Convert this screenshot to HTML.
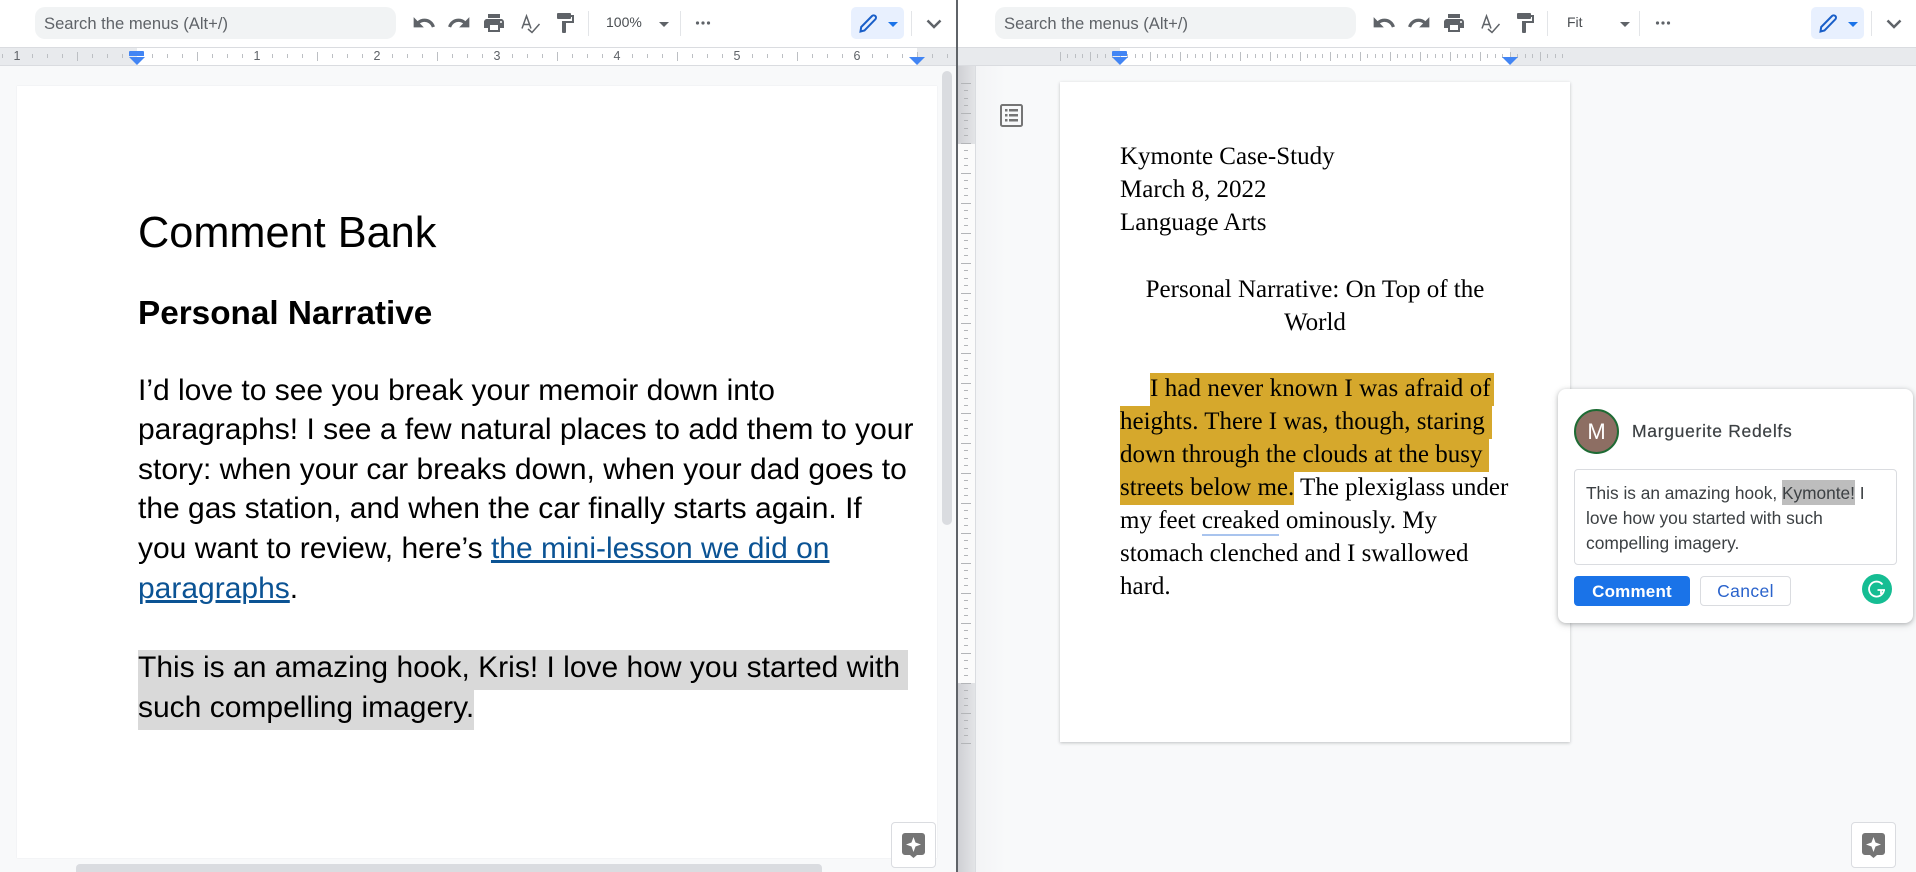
<!DOCTYPE html>
<html lang="en"><head><meta charset="utf-8"><title>Docs</title>
<style>
html,body{margin:0;padding:0;width:1916px;height:872px;overflow:hidden;background:#f8f9fa}
body{position:relative;font-family:"Liberation Sans",sans-serif;color:#000}
.a{position:absolute}
.l{position:absolute;white-space:nowrap;height:40px;line-height:40px;font-size:30px;left:138px}
.s{position:absolute;white-space:nowrap;height:33px;line-height:33px;font-size:25px;font-family:"Liberation Serif",serif;left:1120px;color:#000}
.hl{position:absolute;background:#d6a82c}
.search{position:absolute;top:7px;height:32px;border-radius:10px;background:#f1f3f4;color:#5f6368;font-size:16.6px;line-height:33px;box-sizing:border-box;padding-left:9px}
svg.i{position:absolute;top:11px;width:24px;height:24px;fill:#5f6368}
.sep{position:absolute;top:11px;width:1px;height:25px;background:#e3e5e8}
.car{position:absolute;top:22px;width:0;height:0;border-left:5px solid transparent;border-right:5px solid transparent;border-top:5px solid #5f6368}
.num{position:absolute;top:48px;width:16px;text-align:center;font-size:12.5px;line-height:17px;color:#5f6368;margin-left:-8px}
.mk{position:absolute;top:57px;width:0;height:0;border-left:8px solid transparent;border-right:8px solid transparent;border-top:8px solid #4285f4}
.mr{position:absolute;top:51px;width:15px;height:5px;background:#4285f4;border-radius:1px 1px 0 0}
.spk{position:absolute;top:822px;width:45px;height:46px;box-sizing:border-box;background:#fff;border:1px solid #dadce0;border-radius:4px}
</style></head><body>

<!-- left pane -->
<div class="a" style="left:0;top:0;width:956px;height:47px;background:#fff;border-bottom:1px solid #dadce0"></div>
<div class="search" style="left:35px;width:361px">Search the menus (Alt+/)</div>
<svg class="i" style="left:412px" viewBox="0 0 24 24"><path stroke="#5f6368" stroke-width=".7" d="M12.5 8c-2.65 0-5.05.99-6.9 2.6L2 7v9h9l-3.62-3.62c1.39-1.16 3.16-1.88 5.12-1.88 3.54 0 6.55 2.31 7.6 5.5l2.37-.78C21.08 11.03 17.15 8 12.5 8z"/></svg>
<svg class="i" style="left:447px" viewBox="0 0 24 24"><path stroke="#5f6368" stroke-width=".7" d="M18.4 10.6C16.55 8.99 14.15 8 11.5 8c-4.65 0-8.58 3.03-9.96 7.22L3.9 16c1.05-3.19 4.05-5.5 7.6-5.5 1.95 0 3.73.72 5.12 1.88L13 16h9V7l-3.6 3.6z"/></svg>
<svg class="i" style="left:482px" viewBox="0 0 24 24"><path d="M19 8H5c-1.66 0-3 1.34-3 3v6h4v4h12v-4h4v-6c0-1.66-1.34-3-3-3zm-3 11H8v-5h8v5zm3-7c-.55 0-1-.45-1-1s.45-1 1-1 1 .45 1 1-.45 1-1 1zm-1-9H6v4h12V3z"/></svg>
<svg class="i" style="left:518px" viewBox="0 0 24 24"><path fill="none" stroke="#5f6368" stroke-width="1.500" d="M4 17.500L8.500 5l4.500 12.500M5.500 13.500h6M10 18l4 3.500 7.500-8.500"/></svg>
<svg class="i" style="left:553px" viewBox="0 0 24 24"><path d="M18 4V3c0-.55-.45-1-1-1H5c-.55 0-1 .45-1 1v4c0 .55.45 1 1 1h12c.55 0 1-.45 1-1V6h1v4H9v11c0 .55.45 1 1 1h2c.55 0 1-.45 1-1v-9h8V4h-3z"/></svg>
<div class="sep" style="left:588px"></div>
<div class="a" style="left:606px;top:11px;font-size:14px;line-height:22px;color:#4a4e52">100%</div>
<div class="car" style="left:659px"></div>
<div class="sep" style="left:680px"></div>
<svg class="i" style="left:691px" viewBox="0 0 24 24"><circle cx="6.500" cy="12" r="1.600"/><circle cx="12" cy="12" r="1.600"/><circle cx="17.500" cy="12" r="1.600"/></svg>
<div class="a" style="left:851px;top:7px;width:53px;height:32px;border-radius:5px;background:#e8f0fe"></div>
<svg class="i" style="left:856px;fill:none" viewBox="0 0 24 24"><path stroke="#1a5fc8" stroke-width="2" d="M4.500 20.500l.7-4.500L16 5a2.300 2.300 0 0 1 3.300 3.300L8.500 19.500z"/></svg>
<div class="car" style="left:888px;border-top-color:#1a73e8"></div>
<div class="sep" style="left:911px"></div>
<svg class="i" style="left:922px;fill:none" viewBox="0 0 24 24"><path stroke="#5f6368" stroke-width="2.500" d="M5.500 9.500l6.500 6.500 6.500-6.500"/></svg>

<div class="a" style="left:0;top:48px;width:956px;height:17px;background:#e8eaed;border-bottom:1px solid #dadce0"></div>
<div class="a" style="left:137px;top:48px;width:780px;height:17px;background:#fff"></div>
<svg class="a" style="left:0;top:48px" width="956" height="17"><defs><pattern id="rl" x="137" y="0" width="120" height="17" patternUnits="userSpaceOnUse"><g fill="#bcbfc3"><rect x="15" y="6" width="1" height="4"/><rect x="30" y="6" width="1" height="4"/><rect x="45" y="6" width="1" height="4"/><rect x="60" y="4" width="1" height="9"/><rect x="75" y="6" width="1" height="4"/><rect x="90" y="6" width="1" height="4"/><rect x="105" y="6" width="1" height="4"/></g></pattern></defs><rect width="956" height="17" fill="url(#rl)"/></svg>
<div class="num" style="left:17px">1</div><div class="num" style="left:257px">1</div><div class="num" style="left:377px">2</div><div class="num" style="left:497px">3</div><div class="num" style="left:617px">4</div><div class="num" style="left:737px">5</div><div class="num" style="left:857px">6</div>
<div class="mr" style="left:129px"></div><div class="mk" style="left:129px"></div><div class="mk" style="left:909px"></div>

<div class="a" style="left:17px;top:86px;width:920px;height:772px;background:#fff;box-shadow:0 0 1px #dfe1e5"></div>
<div class="a" style="left:942px;top:71px;width:10px;height:454px;border-radius:5px;background:#dadce0"></div>
<div class="a" style="left:76px;top:864px;width:746px;height:8px;border-radius:4px 4px 0 0;background:#dadce0"></div>

<div class="l" style="top:208px;font-size:43.3px;height:50px;line-height:50px">Comment Bank</div>
<div class="l" style="top:294px;font-size:33.3px;font-weight:bold">Personal Narrative</div>
<div class="l" style="top:371px">I’d love to see you break your memoir down into</div>
<div class="l" style="top:410px">paragraphs! I see a few natural places to add them to your</div>
<div class="l" style="top:450px">story: when your car breaks down, when your dad goes to</div>
<div class="l" style="top:489px">the gas station, and when the car finally starts again. If</div>
<div class="l" style="top:529px">you want to review, here’s <span style="color:#0b5394;text-decoration:underline">the mini-lesson we did on</span></div>
<div class="l" style="top:569px"><span style="color:#0b5394;text-decoration:underline">paragraphs</span>.</div>
<div class="a" style="left:138px;top:650px;width:770px;height:40px;background:#d9d9d9"></div>
<div class="a" style="left:138px;top:690px;width:336px;height:40px;background:#d9d9d9"></div>
<div class="l" style="top:648px">This is an amazing hook, Kris! I love how you started with</div>
<div class="l" style="top:688px">such compelling imagery.</div>

<div class="spk" style="left:891px"><svg class="a" style="left:10px;top:10px" width="23" height="25" viewBox="0 0 23 25"><path fill="#757575" d="M3 0h17a3 3 0 0 1 3 3v16a3 3 0 0 1-3 3h-5l-3.500 3L8 22H3a3 3 0 0 1-3-3V3a3 3 0 0 1 3-3z"/><path fill="#fff" d="M11.500 4l2 5.500 5.500 2-5.500 2-2 5.500-2-5.500-5.500-2 5.500-2z"/></svg></div>

<!-- divider and vertical ruler -->
<div class="a" style="left:956px;top:0;width:2px;height:872px;background:#5f6368"></div>
<div class="a" style="left:976px;top:66px;width:30px;height:806px;background:linear-gradient(90deg,#f3f4f6,#f8f9fa)"></div>
<div class="a" style="left:958px;top:66px;width:17px;height:806px;background:linear-gradient(90deg,#cfd0d4,#e3e4e7);border-right:1px solid #dadce0"></div>
<div class="a" style="left:958px;top:144px;width:17px;height:539px;background:#fbfbfb"></div>
<svg class="a" style="left:958px;top:82px" width="17" height="663"><defs><pattern id="rv" x="0" y="0" width="17" height="30" patternUnits="userSpaceOnUse"><g fill="#b3b5b8"><rect x="3" y="1" width="10" height="1"/><rect x="6" y="8" width="4" height="1"/><rect x="6" y="16" width="4" height="1"/><rect x="6" y="23" width="4" height="1"/></g></pattern></defs><rect width="17" height="663" fill="url(#rv)"/></svg>

<!-- right pane -->
<div class="a" style="left:958px;top:0;width:958px;height:47px;background:#fff;border-bottom:1px solid #dadce0"></div>
<div class="search" style="left:995px;width:361px">Search the menus (Alt+/)</div>
<svg class="i" style="left:1372px" viewBox="0 0 24 24"><path stroke="#5f6368" stroke-width=".7" d="M12.500 8c-2.650 0-5.050.99-6.900 2.600L2 7v9h9l-3.620-3.620c1.390-1.160 3.160-1.880 5.120-1.880 3.540 0 6.550 2.310 7.600 5.500l2.370-.78C21.080 11.030 17.150 8 12.500 8z"/></svg>
<svg class="i" style="left:1407px" viewBox="0 0 24 24"><path stroke="#5f6368" stroke-width=".7" d="M18.400 10.600C16.550 8.990 14.150 8 11.500 8c-4.650 0-8.580 3.030-9.960 7.220L3.900 16c1.050-3.190 4.050-5.500 7.600-5.500 1.950 0 3.730.72 5.120 1.880L13 16h9V7l-3.600 3.600z"/></svg>
<svg class="i" style="left:1442px" viewBox="0 0 24 24"><path d="M19 8H5c-1.660 0-3 1.340-3 3v6h4v4h12v-4h4v-6c0-1.660-1.340-3-3-3zm-3 11H8v-5h8v5zm3-7c-.55 0-1-.45-1-1s.45-1 1-1 1 .45 1 1-.45 1-1 1zm-1-9H6v4h12V3z"/></svg>
<svg class="i" style="left:1478px" viewBox="0 0 24 24"><path fill="none" stroke="#5f6368" stroke-width="1.500" d="M4 17.500L8.500 5l4.500 12.500M5.500 13.500h6M10 18l4 3.500 7.500-8.500"/></svg>
<svg class="i" style="left:1513px" viewBox="0 0 24 24"><path d="M18 4V3c0-.55-.45-1-1-1H5c-.55 0-1 .45-1 1v4c0 .55.45 1 1 1h12c.55 0 1-.45 1-1V6h1v4H9v11c0 .55.45 1 1 1h2c.55 0 1-.45 1-1v-9h8V4h-3z"/></svg>
<div class="sep" style="left:1547px"></div>
<div class="a" style="left:1567px;top:11px;font-size:14px;line-height:22px;color:#4a4e52">Fit</div>
<div class="car" style="left:1620px"></div>
<div class="sep" style="left:1639px"></div>
<svg class="i" style="left:1651px" viewBox="0 0 24 24"><circle cx="6.500" cy="12" r="1.600"/><circle cx="12" cy="12" r="1.600"/><circle cx="17.500" cy="12" r="1.600"/></svg>
<div class="a" style="left:1811px;top:7px;width:53px;height:32px;border-radius:5px;background:#e8f0fe"></div>
<svg class="i" style="left:1816px;fill:none" viewBox="0 0 24 24"><path stroke="#1a5fc8" stroke-width="2" d="M4.500 20.500l.7-4.500L16 5a2.300 2.300 0 0 1 3.300 3.300L8.500 19.500z"/></svg>
<div class="car" style="left:1848px;border-top-color:#1a73e8"></div>
<div class="sep" style="left:1871px"></div>
<svg class="i" style="left:1882px;fill:none" viewBox="0 0 24 24"><path stroke="#5f6368" stroke-width="2.500" d="M5.500 9.500l6.500 6.500 6.500-6.500"/></svg>

<div class="a" style="left:958px;top:48px;width:958px;height:17px;background:#e8eaed;border-bottom:1px solid #dadce0"></div>
<div class="a" style="left:1120px;top:48px;width:390px;height:17px;background:#fff"></div>
<svg class="a" style="left:1060px;top:48px" width="510" height="17"><defs><pattern id="rr" x="0" y="0" width="30" height="17" patternUnits="userSpaceOnUse"><g fill="#bcbfc3"><rect x="0" y="4" width="1" height="9"/><rect x="7" y="6" width="1" height="4"/><rect x="15" y="6" width="1" height="4"/><rect x="22" y="6" width="1" height="4"/></g></pattern></defs><rect width="510" height="17" fill="url(#rr)"/></svg>
<div class="mr" style="left:1112px"></div><div class="mk" style="left:1112px"></div><div class="mk" style="left:1502px"></div>

<svg class="a" style="left:1000px;top:104px" width="23" height="23" viewBox="0 0 23 23"><rect x="1" y="1" width="21" height="21" rx="1.500" fill="none" stroke="#757575" stroke-width="2"/><g fill="#757575"><rect x="5" y="5" width="2.500" height="2.500"/><rect x="9" y="5" width="9" height="2.500"/><rect x="5" y="10" width="2.500" height="2.500"/><rect x="9" y="10" width="9" height="2.500"/><rect x="5" y="15" width="2.500" height="2.500"/><rect x="9" y="15" width="9" height="2.500"/></g></svg>

<div class="a" style="left:1060px;top:82px;width:510px;height:660px;background:#fff;box-shadow:0 1px 3px rgba(60,64,67,.3)"></div>
<div class="s" style="top:140px">Kymonte Case-Study</div>
<div class="s" style="top:173px">March 8, 2022</div>
<div class="s" style="top:206px">Language Arts</div>
<div class="s" style="top:273px;left:1120px;width:390px;text-align:center">Personal Narrative: On Top of the</div>
<div class="s" style="top:306px;left:1120px;width:390px;text-align:center">World</div>
<div class="hl" style="left:1150px;top:373px;width:344px;height:33px"></div>
<div class="hl" style="left:1120px;top:406px;width:372px;height:33px"></div>
<div class="hl" style="left:1120px;top:439px;width:369px;height:33px"></div>
<div class="hl" style="left:1120px;top:472px;width:174px;height:33px"></div>
<div class="s" style="top:372px;left:1150px;letter-spacing:.08px">I had never known I was afraid of</div>
<div class="s" style="top:405px">heights. There I was, though, staring</div>
<div class="s" style="top:438px">down through the clouds at the busy</div>
<div class="s" style="top:471px">streets below me. The plexiglass under</div>
<div class="s" style="top:504px">my feet creaked ominously. My</div>
<div class="s" style="top:537px">stomach clenched and I swallowed</div>
<div class="s" style="top:570px">hard.</div>
<div class="a" style="left:1202px;top:534px;width:77px;height:2px;background:#a9c4ee"></div>

<div class="spk" style="left:1851px"><svg class="a" style="left:10px;top:10px" width="23" height="25" viewBox="0 0 23 25"><path fill="#757575" d="M3 0h17a3 3 0 0 1 3 3v16a3 3 0 0 1-3 3h-5l-3.500 3L8 22H3a3 3 0 0 1-3-3V3a3 3 0 0 1 3-3z"/><path fill="#fff" d="M11.500 4l2 5.500 5.500 2-5.500 2-2 5.500-2-5.500-5.500-2 5.500-2z"/></svg></div>

<!-- comment card -->
<div class="a" style="left:1558px;top:389px;width:355px;height:234px;background:#fff;border-radius:8px;box-shadow:0 1px 4px rgba(60,64,67,.3),0 2px 8px rgba(60,64,67,.15)"></div>
<div class="a" style="left:1574px;top:409px;width:45px;height:45px;box-sizing:border-box;border-radius:50%;background:#8d6e63;border:2px solid #1e6b34;color:#fff;text-align:center;font-size:22px;line-height:41px">M</div>
<div class="a" style="left:1632px;top:420px;font-size:17.5px;letter-spacing:.7px;-webkit-text-stroke:.2px #3c4043;line-height:22px;color:#3c4043;white-space:nowrap">Marguerite Redelfs</div>
<div class="a" style="left:1574px;top:469px;width:323px;height:96px;box-sizing:border-box;border:1px solid #dadce0;border-radius:4px"></div>
<div class="a" style="left:1782px;top:480px;width:73px;height:25px;background:#bdbdbd"></div>
<div class="a" style="left:1586px;top:481px;font-size:17.3px;line-height:25px;color:#3c4043;white-space:nowrap">This is an amazing hook, Kymonte! I<br><span style="font-size:17.4px">love how you started with such</span><br><span style="font-size:17.4px">compelling imagery.</span></div>
<div class="a" style="left:1574px;top:576px;width:116px;height:30px;border-radius:4px;background:#1a73e8;color:#fff;font-size:17px;letter-spacing:.2px;font-weight:bold;line-height:31px;text-align:center">Comment</div>
<div class="a" style="left:1700px;top:576px;width:91px;height:30px;box-sizing:border-box;border-radius:4px;background:#fff;border:1px solid #dadce0;color:#2a63cc;font-size:17.5px;letter-spacing:.4px;line-height:29px;text-align:center">Cancel</div>
<svg class="a" style="left:1862px;top:574px" width="30" height="30" viewBox="0 0 30 30"><circle cx="15" cy="15" r="15" fill="#15bd93"/><path d="M20.500 10.500A7.500 7.500 0 1 0 22 16h-6.500M19 20v-4h4" fill="none" stroke="#fff" stroke-width="1.800"/></svg>
</body></html>
